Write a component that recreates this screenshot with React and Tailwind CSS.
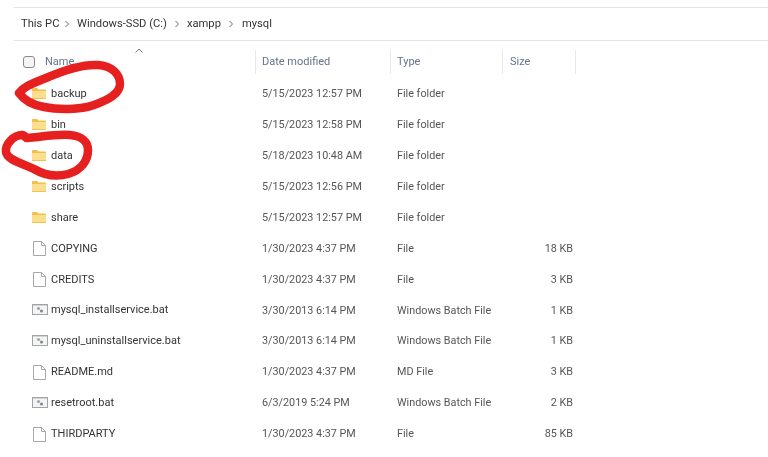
const FolderIcon = () => (
  <svg width="14" height="11" viewBox="0 0 14 11" className="block mb-[2px]">
    <path d="M0 1 a1 1 0 0 1 1-1 h4 l1.5 1.5 h6.5 a1 1 0 0 1 1 1 v7.5 a1 1 0 0 1-1 1 h-12 a1 1 0 0 1-1-1z" fill="#f0bf4c" />
    <path d="M0 3 h14 v7 a1 1 0 0 1-1 1 h-12 a1 1 0 0 1-1-1z" fill="#fcdf8c" />
    <path d="M0 10 h14 v1 h-14z" fill="#eec25a" />
  </svg>
);

const FileIcon = () => (
  <svg width="13" height="15" viewBox="0 0 13 15" className="block">
    <path d="M0.5 0.5 h8 l4 4 v10 h-12z" fill="#fff" stroke="#a8a8a8" />
    <path d="M8.5 0.5 v4 h4" fill="none" stroke="#a8a8a8" />
  </svg>
);

const BatIcon = () => (
  <svg width="16" height="11" viewBox="0 0 16 11" className="block mb-[2px]">
    <rect x="0.5" y="0.5" width="15" height="10" fill="#f4f4f4" stroke="#a3a3a3" />
    <rect x="1" y="1" width="14" height="1" fill="#d4d4d4" />
    <circle cx="6.5" cy="4.5" r="1.6" fill="#9aa8b0" />
    <circle cx="9.5" cy="7" r="1.5" fill="#77858e" />
  </svg>
);

const rows = [
  ["backup", "5/15/2023 12:57 PM", "File folder", "", "folder"],
  ["bin", "5/15/2023 12:58 PM", "File folder", "", "folder"],
  ["data", "5/18/2023 10:48 AM", "File folder", "", "folder"],
  ["scripts", "5/15/2023 12:56 PM", "File folder", "", "folder"],
  ["share", "5/15/2023 12:57 PM", "File folder", "", "folder"],
  ["COPYING", "1/30/2023 4:37 PM", "File", "18 KB", "file"],
  ["CREDITS", "1/30/2023 4:37 PM", "File", "3 KB", "file"],
  ["mysql_installservice.bat", "3/30/2013 6:14 PM", "Windows Batch File", "1 KB", "bat"],
  ["mysql_uninstallservice.bat", "3/30/2013 6:14 PM", "Windows Batch File", "1 KB", "bat"],
  ["README.md", "1/30/2023 4:37 PM", "MD File", "3 KB", "file"],
  ["resetroot.bat", "6/3/2019 5:24 PM", "Windows Batch File", "2 KB", "bat"],
  ["THIRDPARTY", "1/30/2023 4:37 PM", "File", "85 KB", "file"],
];

const Chevron = () => (
  <svg width="6" height="8" viewBox="0 0 6 8" className="mx-[7px]">
    <path d="M1.5 1 L4.5 4 L1.5 7" fill="none" stroke="#6b6b6b" strokeWidth="1" />
  </svg>
);

export default function App() {
  return (
    <div
      className="relative w-[768px] h-[457px] overflow-hidden bg-white text-[10.8px] text-[#555] blur-[0.3px]"
      style={{ fontFamily: 'Roboto, "Noto Sans", sans-serif' }}
    >
      <div className="pt-[7px] pl-[13px]">
        <div className="h-[34px] flex items-center pl-[8px] border-y border-[#e6e6e6] text-[#333] text-[11.2px]">
          <span className="w-[36px] whitespace-nowrap">This PC</span>
          <Chevron />
          <span>Windows-SSD (C:)</span>
          <Chevron />
          <span>xampp</span>
          <Chevron />
          <span className="ml-[1px]">mysql</span>
        </div>
      </div>

      <div className="relative mt-[9px] h-[24px] flex text-[#64748b] text-[11px]">
        <div className="w-[255px] flex items-center pl-[23px]">
          <span className="w-[12px] h-[12px] rounded-[3px] border border-[#8a8a8a] bg-[#f5f5f5] mr-[10px]" />
          <span>Name</span>
        </div>
        <div className="w-[135px] flex items-center pl-[6px] border-l border-[#e8e8e8]">Date modified</div>
        <div className="w-[112px] flex items-center pl-[6px] border-l border-[#e8e8e8]">Type</div>
        <div className="w-[74px] flex items-center pl-[7px] border-x border-[#e8e8e8]">Size</div>
        <svg width="10" height="6" viewBox="0 0 10 6" className="absolute left-[134px] top-[-2px]">
          <path d="M1.5 4.5 L5 1 L8.5 4.5" fill="none" stroke="#777" strokeWidth="1" />
        </svg>
      </div>

      <div className="mt-[5px]">
        {rows.map(([name, date, type, size, kind]) => (
          <div key={name} className="h-[30.9px] flex items-center">
            <div className="w-[255px] flex items-center pl-[32px]">
              <span className="w-[19px] flex">
                {kind === "folder" && <FolderIcon />}
                {kind === "file" && <span className="pl-[1px]"><FileIcon /></span>}
                {kind === "bat" && <BatIcon />}
              </span>
              <span className="text-[#333] text-[11px]">{name}</span>
            </div>
            <div className="w-[135px] pl-[7px]">{date}</div>
            <div className="w-[112px] pl-[7px]">{type}</div>
            <div className="w-[71px] text-right">{size}</div>
          </div>
        ))}
      </div>

      <svg width="768" height="457" viewBox="0 0 768 457" className="absolute inset-0 pointer-events-none">
        <path
          d="M19 93 C26 85 34 83 46 78 C62 71 82 64 98 65 C112 66 120 74 120 84 C120 94 108 100 94 105 C80 110 58 110 44 107 C32 105 24 100 19 93 Z"
          fill="none" stroke="#e61f1f" strokeWidth="8.5" strokeLinejoin="round"
        />
        <path
          d="M27 138 C40 137 56 134 70 135 C82 136 88 142 88 150 C88 160 82 170 68 174 C56 177 44 175 34 169 C22 163 7 160 6 152 C5 144 14 135 22 135 C25 135 25 138 27 138 Z"
          fill="none" stroke="#e61f1f" strokeWidth="8.5" strokeLinejoin="round"
        />
      </svg>
    </div>
  );
}
